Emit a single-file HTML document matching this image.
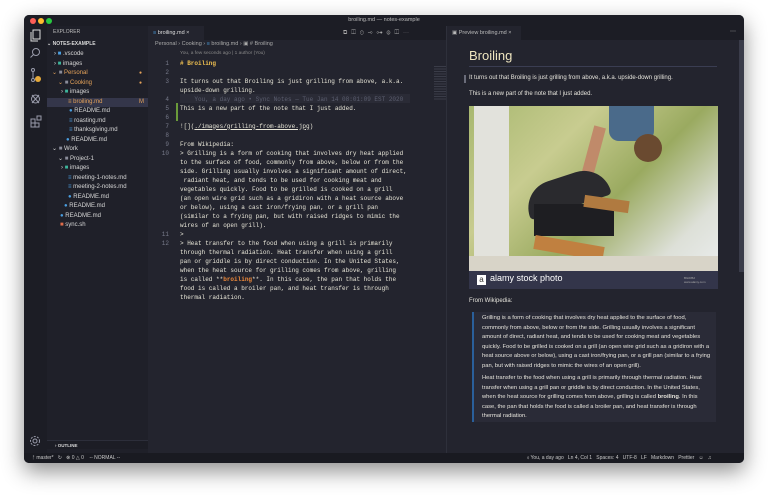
<!DOCTYPE html>
<html><head><meta charset="utf-8"><style>
*{margin:0;padding:0;box-sizing:border-box}
body{width:768px;height:495px;background:#fff;position:relative;overflow:hidden;font-family:"Liberation Sans",sans-serif}
.win{position:absolute;left:24px;top:15px;width:720px;height:448px;background:#22232d;border-radius:5px;overflow:hidden;box-shadow:0 8px 22px rgba(0,0,0,.45)}
.a{position:absolute}
.title{left:0;top:0;width:720px;height:11px;background:#1c1d25;color:#bbb;font-size:5.5px;text-align:center;line-height:11px}
.dot{width:6px;height:6px;border-radius:50%;top:3px}
.act{left:0;top:11px;width:23px;height:427px;background:#1c1d25}
.side{left:23px;top:11px;width:101px;height:427px;background:#1f2029}
.side div.r{position:absolute;left:0;width:101px;height:9.4px;font-size:6px;line-height:9.4px;color:#d8d8d8;white-space:nowrap}
.ed{left:124px;top:11px;width:298px;height:427px;background:#23242e}
.code{font-family:"Liberation Mono",monospace;font-size:6px;color:#e8e6d8;white-space:pre;line-height:9px}
.ln{font-family:"Liberation Mono",monospace;font-size:6px;color:#777a8a;text-align:right;width:12px;line-height:9px}
.pv{left:422px;top:11px;width:298px;height:427px;background:#23242e;border-left:1px solid #2e303b}
.p{font-size:6px;color:#e6e4dc;line-height:9.5px}
.status{left:0;top:438px;width:720px;height:10px;background:#191a21;color:#c8c8c8;font-size:5px;line-height:10px}
.dt{position:absolute;left:92px;font-size:5px}
</style></head><body>
<div class="win">
 <div class="a title">broiling.md — notes-example</div>
 <div class="a dot" style="left:6px;background:#fe5f57"></div>
 <div class="a dot" style="left:14px;background:#febc2e"></div>
 <div class="a dot" style="left:22px;background:#28c840"></div>
 <div class="a act">
  <svg width="23" height="130" viewBox="0 0 23 130" fill="none" stroke="#9a9cab" stroke-width="1">
   <rect x="9" y="4" width="7" height="9" stroke="#ddd"/><path d="M7 6v9h7" stroke="#ddd"/>
   <circle cx="12" cy="26" r="3.5"/><path d="M9.5 28.5l-3 3"/>
   <circle cx="9" cy="44" r="1.5"/><circle cx="9" cy="54" r="1.5"/><path d="M9 46v7"/>
   <circle cx="14" cy="53" r="3" fill="#e5a93a" stroke="none"/>
   <circle cx="11.5" cy="73" r="4"/><path d="M8 69l7 8M15 69l-7 8"/>
   <rect x="7" y="93" width="4" height="4"/><rect x="11" y="97" width="4" height="4"/><rect x="7" y="97" width="4" height="4"/><rect x="13" y="90" width="4" height="4"/>
  </svg>
  <svg class="a" style="left:5px;top:409px" width="12" height="12" viewBox="0 0 12 12" fill="none" stroke="#9a9cab"><circle cx="6" cy="6" r="2"/><circle cx="6" cy="6" r="4.5" stroke-dasharray="2 1.3"/></svg>
 </div>
 <div class="a side">
  <div class="r" style="top:2px;left:6px;font-size:5px;color:#bbb">EXPLORER</div>
  <div class="r" style="top:14px;left:0;font-weight:bold;font-size:5px">⌄ NOTES-EXAMPLE</div>
  <div class="r" style="top:24px;left:7px">› <span style="color:#4a9ee0">■</span> .vscode</div>
  <div class="r" style="top:33.5px;left:7px">› <span style="color:#3cb39a">■</span> images</div>
  <div class="r" style="top:43px;left:5px;color:#e6a35a">⌄ <span style="color:#8a8c9a">■</span> Personal<span class="dt" style="left:87px">●</span></div>
  <div class="r" style="top:52.5px;left:11px;color:#e6a35a">⌄ <span style="color:#8a8c9a">■</span> Cooking<span class="dt" style="left:81px">●</span></div>
  <div class="r" style="top:62px;left:14px">› <span style="color:#3cb39a">■</span> images</div>
  <div class="r" style="top:71.5px;left:0;background:#34364a;color:#e6a35a;padding-left:21px">≡ broiling.md<span style="position:absolute;left:92px">M</span></div>
  <div class="r" style="top:81px;left:22px"><span style="color:#4a9ee0">●</span> README.md</div>
  <div class="r" style="top:90.5px;left:22px"><span style="color:#4a9ee0">≡</span> roasting.md</div>
  <div class="r" style="top:100px;left:22px"><span style="color:#4a9ee0">≡</span> thanksgiving.md</div>
  <div class="r" style="top:109.5px;left:19px"><span style="color:#4a9ee0">●</span> README.md</div>
  <div class="r" style="top:119px;left:5px">⌄ <span style="color:#8a8c9a">■</span> Work</div>
  <div class="r" style="top:128.5px;left:11px">⌄ <span style="color:#8a8c9a">■</span> Project-1</div>
  <div class="r" style="top:138px;left:14px">› <span style="color:#3cb39a">■</span> images</div>
  <div class="r" style="top:147.5px;left:21px"><span style="color:#4a9ee0">≡</span> meeting-1-notes.md</div>
  <div class="r" style="top:157px;left:21px"><span style="color:#4a9ee0">≡</span> meeting-2-notes.md</div>
  <div class="r" style="top:166.5px;left:21px"><span style="color:#4a9ee0">●</span> README.md</div>
  <div class="r" style="top:176px;left:17px"><span style="color:#4a9ee0">●</span> README.md</div>
  <div class="r" style="top:185.5px;left:13px"><span style="color:#4a9ee0">●</span> README.md</div>
  <div class="r" style="top:195px;left:13px"><span style="color:#e06c4a">■</span> sync.sh</div>
  <div class="r" style="top:414px;left:0;padding-left:8px;font-size:4.5px;font-weight:bold;border-top:1px solid #2c2e3a;width:101px;background:#1c1d25">› OUTLINE</div>
 </div>
 <div class="a ed">
  <div class="a" style="left:0;top:0;width:298px;height:14px;background:#1c1d25"></div>
  <div class="a" style="left:0;top:0;width:56px;height:14px;background:#23242e;font-size:5.5px;color:#ddd;line-height:14px;padding-left:5px"><span style="color:#4a9ee0">≡</span> broiling.md ×</div>
  <div class="a" style="left:195px;top:0;font-size:6px;color:#aaa;line-height:14px;letter-spacing:4px">⧉◫⊙⊸⊶⊛◫⋯</div>
  <div class="a" style="left:7px;top:15px;font-size:5.5px;color:#aaa">Personal › Cooking › <span style="color:#4a9ee0">≡</span> broiling.md › ▣ # Broiling</div>
  <div class="a" style="left:32px;top:25px;font-size:4.8px;color:#888">You, a few seconds ago | 1 author (You)</div>
  <div class="a ln" style="left:9px;top:32.5px">1<br>2<br>3<br><br>4<br>5<br>6<br>7<br>8<br>9<br>10<br><br><br><br><br><br><br><br><br>11<br>12</div>
  <div class="a" style="left:28px;top:77px;width:2px;height:18px;background:#6a9a3a"></div>
  <div class="a" style="left:32px;top:68px;width:230px;height:9px;background:#2a2b36"></div>
  <div class="a code" style="left:32px;top:32.5px"><span style="color:#f0c050;font-weight:bold"># Broiling</span>

It turns out that Broiling is just grilling from above, a.k.a.
upside-down grilling.
<span style="color:#5c5f70">    You, a day ago • Sync Notes — Tue Jan 14 08:01:09 EST 2020</span>
This is a new part of the note that I just added.

![](<u>./images/grilling-from-above.jpg</u>)

From Wikipedia:
&gt; Grilling is a form of cooking that involves dry heat applied
to the surface of food, commonly from above, below or from the
side. Grilling usually involves a significant amount of direct,
 radiant heat, and tends to be used for cooking meat and
vegetables quickly. Food to be grilled is cooked on a grill
(an open wire grid such as a gridiron with a heat source above
or below), using a cast iron/frying pan, or a grill pan
(similar to a frying pan, but with raised ridges to mimic the
wires of an open grill).
&gt;
&gt; Heat transfer to the food when using a grill is primarily
through thermal radiation. Heat transfer when using a grill
pan or griddle is by direct conduction. In the United States,
when the heat source for grilling comes from above, grilling
is called **<span style="color:#f08a3a;font-weight:bold">broiling</span>**. In this case, the pan that holds the
food is called a broiler pan, and heat transfer is through
thermal radiation.</div>
  <div class="a" style="left:286px;top:40px;width:22px;height:35px;background:repeating-linear-gradient(#4a4c5a 0 1px,transparent 1px 2.5px);opacity:.6"></div>
  <div class="a" style="left:316px;top:39px;width:6px;height:252px;background:#3a3c4a"></div>
 </div>
 <div class="a pv">
  <div class="a" style="left:0;top:0;width:298px;height:14px;background:#1c1d25"></div>
  <div class="a" style="left:0;top:0;width:74px;height:14px;background:#23242e;font-size:5.5px;color:#bbb;line-height:14px;padding-left:5px">▣ Preview broiling.md ×</div>
  <div class="a" style="left:283px;top:0;font-size:6px;color:#aaa;line-height:12px">⋯</div>
  <div class="a" style="left:22px;top:22px;font-size:13px;color:#efe6c0">Broiling</div>
  <div class="a" style="left:22px;top:40px;width:248px;height:1px;background:#3a3d52"></div>
  <div class="a" style="left:17px;top:49px;width:2px;height:8px;background:#6a6c7a"></div>
  <div class="a p" style="left:22px;top:48px">It turns out that Broiling is just grilling from above, a.k.a. upside-down grilling.</div>
  <div class="a p" style="left:22px;top:64px">This is a new part of the note that I just added.</div>
  <div class="a" style="left:22px;top:80px;width:249px;height:183px;overflow:hidden;background:linear-gradient(135deg,#a8b870 0%,#c8cc90 30%,#9aaa60 55%,#dde0d8 80%,#eef0f2 100%)">
   <div class="a" style="left:5px;top:0;width:35px;height:165px;background:#e2e2dc"></div>
   <div class="a" style="left:140px;top:0;width:45px;height:35px;background:#4a6a8a;border-radius:0 0 10px 10px"></div>
   <div class="a" style="left:165px;top:28px;width:28px;height:28px;background:#6a4a30;border-radius:50%"></div>
   <div class="a" style="left:118px;top:20px;width:12px;height:55px;background:#c08a6a;transform:rotate(15deg)"></div>
   <div class="a" style="left:55px;top:70px;width:85px;height:32px;background:#2a2a2e;border-radius:40px 40px 6px 6px;transform:rotate(-18deg)"></div>
   <div class="a" style="left:65px;top:98px;width:80px;height:32px;background:#1e1e22"></div>
   <div class="a" style="left:115px;top:92px;width:45px;height:12px;background:#b07a40;transform:rotate(8deg)"></div>
   <div class="a" style="left:65px;top:135px;width:70px;height:14px;background:#c08040;transform:rotate(10deg)"></div>
   <div class="a" style="left:0;top:150px;width:249px;height:15px;background:#d8d4c8"></div>
   <div class="a" style="left:0;top:165px;width:249px;height:18px;background:#33354a"></div>
   <div class="a" style="left:8px;top:169px;width:9px;height:10px;background:#fff;color:#333;font-size:8px;text-align:center;line-height:10px">a</div>
   <div class="a" style="left:21px;top:167px;color:#fff;font-size:9px">alamy stock photo</div>
   <div class="a" style="left:215px;top:170px;color:#aaa;font-size:3px">BG0352<br>www.alamy.com</div>
  </div>
  <div class="a p" style="left:22px;top:271px">From Wikipedia:</div>
  <div class="a" style="left:25px;top:286px;width:244px;height:110px;background:#2a2b37;border-left:2px solid #2a5f9a"></div>
  <div class="a p" style="left:35px;top:288px;width:230px;font-size:5.8px">Grilling is a form of cooking that involves dry heat applied to the surface of food, commonly from above, below or from the side. Grilling usually involves a significant amount of direct, radiant heat, and tends to be used for cooking meat and vegetables quickly. Food to be grilled is cooked on a grill (an open wire grid such as a gridiron with a heat source above or below), using a cast iron/frying pan, or a grill pan (similar to a frying pan, but with raised ridges to mimic the wires of an open grill).</div>
  <div class="a p" style="left:35px;top:348px;width:230px;font-size:5.8px">Heat transfer to the food when using a grill is primarily through thermal radiation. Heat transfer when using a grill pan or griddle is by direct conduction. In the United States, when the heat source for grilling comes from above, grilling is called <b>broiling</b>. In this case, the pan that holds the food is called a broiler pan, and heat transfer is through thermal radiation.</div>
  <div class="a" style="left:292px;top:14px;width:5px;height:232px;background:#3a3c4a"></div>
 </div>
 <div class="a status">
  <span class="a" style="left:8px">ᚠ master*&nbsp;&nbsp; ↻&nbsp;&nbsp; ⊗ 0 △ 0&nbsp;&nbsp;&nbsp; -- NORMAL --</span>
  <span class="a" style="left:503px">⬨ You, a day ago&nbsp;&nbsp; Ln 4, Col 1&nbsp;&nbsp; Spaces: 4&nbsp;&nbsp; UTF-8&nbsp;&nbsp; LF&nbsp;&nbsp; Markdown&nbsp;&nbsp; Prettier&nbsp;&nbsp; ☺&nbsp;&nbsp; ♫</span>
 </div>
</div>
</body></html>
